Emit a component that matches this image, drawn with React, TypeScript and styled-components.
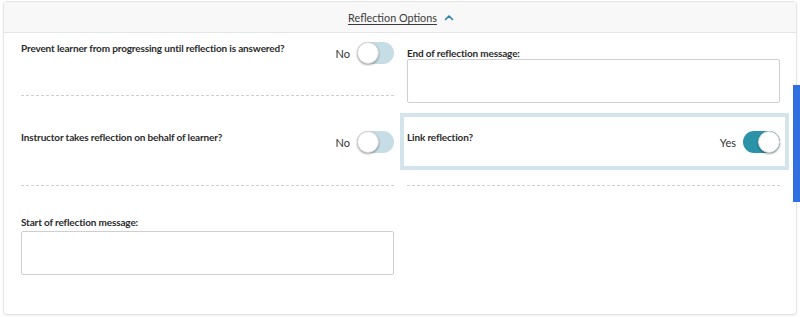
import React from 'react';
import styled, { createGlobalStyle } from 'styled-components';

const GlobalStyle = createGlobalStyle`
  html, body {
    margin: 0;
    padding: 0;
    background: #ffffff;
    font-family: Lato, "Open Sans", sans-serif;
    color: #2b2b2b;
  }
`;

const Toggle = ({ on, text }: { on: boolean; text: string }) => (
  <ToggleWrap>
    <ToggleText>{text}</ToggleText>
    <Track $on={on}>
      <Thumb $on={on} />
    </Track>
  </ToggleWrap>
);

const App = () => {
  return (
    <Page>
      <GlobalStyle />
      <Card>
        <Header>
          <HeaderTitle>Reflection Options</HeaderTitle>
          <Chevron width="10" height="7" viewBox="0 0 10 7">
            <path d="M1.5 5.5 L5 2 L8.5 5.5" fill="none" stroke="#2b7fb0" strokeWidth="1.6" strokeLinecap="round" strokeLinejoin="round" />
          </Chevron>
        </Header>
        <Body>
          <Column>
            <Item $top={9} $height={63} $dotted>
              <Row>
                <Label>Prevent learner from progressing until reflection is answered?</Label>
                <Toggle on={false} text="No" />
              </Row>
            </Item>
            <Item $top={35} $height={90} $dotted>
              <Row>
                <Label>Instructor takes reflection on behalf of learner?</Label>
                <Toggle on={false} text="No" />
              </Row>
            </Item>
            <Item $top={30}>
              <Label>Start of reflection message:</Label>
              <TextBox $gap={3} />
            </Item>
          </Column>
          <Column>
            <Item $top={14}>
              <Label>End of reflection message:</Label>
              <TextBox $gap={0} />
            </Item>
            <Highlight>
              <Row>
                <Label>Link reflection?</Label>
                <Toggle on text="Yes" />
              </Row>
            </Highlight>
            <Divider />
          </Column>
        </Body>
      </Card>
      <ScrollMark />
    </Page>
  );
};

export default App;

const Page = styled.div`
  position: relative;
  width: 800px;
  height: 317px;
  padding: 1px 3px 0 3px;
  box-sizing: border-box;
  overflow: hidden;
`;

const Card = styled.div`
  height: 314px;
  box-sizing: border-box;
  border: 1px solid #e4e4e4;
  border-radius: 4px;
  box-shadow: 0 1px 2px rgba(0, 0, 0, 0.06);
  background: #ffffff;
  overflow: hidden;
`;

const Header = styled.div`
  height: 31px;
  box-sizing: border-box;
  display: flex;
  align-items: center;
  justify-content: center;
  gap: 7px;
  background: #f8f8f8;
  border-bottom: 1px solid #e2e6e8;
  padding-left: 2px;
`;

const HeaderTitle = styled.span`
  font-size: 10.8px;
  color: #3a3a3a;
  text-decoration: underline;
  text-underline-offset: 2px;
`;

const Chevron = styled.svg`
  display: block;
`;

const Body = styled.div`
  display: grid;
  grid-template-columns: 373px 373px;
  column-gap: 13px;
  padding: 0 16px 0 17px;
`;

const Column = styled.div`
  display: flex;
  flex-direction: column;
`;

const Item = styled.div<{ $top: number; $height?: number; $dotted?: boolean }>`
  padding-top: ${(p) => p.$top}px;
  height: ${(p) => (p.$height ? `${p.$height}px` : 'auto')};
  box-sizing: border-box;
  border-bottom: ${(p) => (p.$dotted ? '1px dashed #cfcfcf' : 'none')};
`;

const Row = styled.div`
  display: flex;
  justify-content: space-between;
  align-items: flex-start;
`;

const Label = styled.div`
  font-size: 10px;
  font-weight: 700;
  color: #2b2b2b;
  line-height: 12px;
  letter-spacing: -0.15px;
`;

const TextBox = styled.div<{ $gap: number }>`
  margin-top: ${(p) => p.$gap}px;
  height: 44px;
  box-sizing: border-box;
  border: 1px solid #cfcfcf;
  border-radius: 2px;
  background: #ffffff;
`;

const Highlight = styled.div`
  margin: 10px -9px 0 -7px;
  height: 57px;
  box-sizing: border-box;
  border: 4px solid #d3e4ec;
  padding: 14px 5px 0 3px;
`;

const Divider = styled.div`
  margin-top: 15px;
  border-bottom: 1px dashed #cfcfcf;
`;

const ToggleWrap = styled.div`
  display: flex;
  align-items: center;
  gap: 7px;
`;

const ToggleText = styled.span`
  font-size: 11px;
  color: #333333;
`;

const Track = styled.div<{ $on: boolean }>`
  position: relative;
  width: 37px;
  height: 22px;
  border-radius: 11px;
  background: ${(p) => (p.$on ? '#2b93a8' : '#c6dde6')};
`;

const Thumb = styled.div<{ $on: boolean }>`
  position: absolute;
  top: 0;
  left: ${(p) => (p.$on ? '15px' : '0')};
  width: 22px;
  height: 22px;
  box-sizing: border-box;
  border-radius: 50%;
  background: #ffffff;
  border: 1px solid #d8d8d8;
  box-shadow: 0 1px 2px rgba(0, 0, 0, 0.35);
`;

const ScrollMark = styled.div`
  position: absolute;
  right: 0;
  top: 85px;
  width: 7px;
  height: 117px;
  background: #2f6fe0;
`;
